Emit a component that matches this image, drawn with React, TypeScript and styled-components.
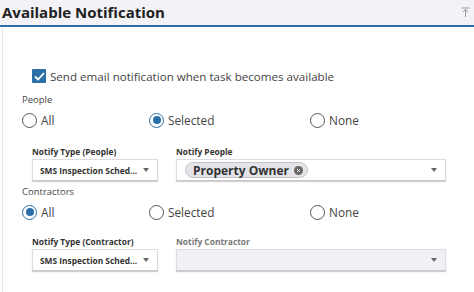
import React from "react";
import styled, { createGlobalStyle } from "styled-components";

const Global = createGlobalStyle`
  html, body { margin: 0; padding: 0; background: #fff; }
  body { font-family: "Open Sans", "Noto Sans", sans-serif; color: #444; }
  * { box-sizing: border-box; }
`;

const Panel = styled.div`
  width: 474px;
  height: 292px;
  overflow: hidden;
  background: #fff;
`;

const Header = styled.div`
  height: 27px;
  background: #f3f3f7;
  border-bottom: 2px solid #2b6fa8;
  display: flex;
  align-items: center;
  justify-content: space-between;
  padding: 0 4px 2px 2px;
`;

const Title = styled.h1`
  margin: 0;
  font-size: 15px;
  font-weight: 700;
  color: #222;
`;

const Body = styled.div`
  border-left: 1px solid #e8e8ec;
  margin-left: 2px;
  padding: 41px 0 0 19px;
  height: 265px;
`;

const CheckRow = styled.label`
  display: flex;
  align-items: center;
  gap: 4px;
  margin-left: 10px;
  font-size: 11.6px;
  color: #444;
  height: 16px;
`;

const CheckBox = styled.span`
  width: 14px;
  height: 14px;
  background: #2b6fa8;
  border-radius: 1px;
  display: flex;
  align-items: center;
  justify-content: center;
`;

const GroupLabel = styled.div<{ $top: number }>`
  font-size: 9.5px;
  color: #444;
  margin-top: ${(p) => p.$top}px;
  line-height: 14px;
`;

const RadioRow = styled.div`
  display: grid;
  grid-template-columns: 127px 161px auto;
  margin-top: 4px;
  height: 18px;
  align-items: center;
`;

const RadioItem = styled.div`
  display: flex;
  align-items: center;
  gap: 4px;
  font-size: 11.8px;
  color: #444;
`;

const RadioCircle = styled.span<{ $on: boolean }>`
  width: 15px;
  height: 15px;
  border-radius: 50%;
  border: 1.5px solid ${(p) => (p.$on ? "#2b6fa8" : "#555")};
  display: flex;
  align-items: center;
  justify-content: center;
  &::after {
    content: "";
    width: 8px;
    height: 8px;
    border-radius: 50%;
    background: ${(p) => (p.$on ? "#2b6fa8" : "transparent")};
  }
`;

const FieldRow = styled.div<{ $top: number }>`
  display: flex;
  gap: 18px;
  margin-left: 10px;
  margin-top: ${(p) => p.$top}px;
`;

const Field = styled.div<{ $w: number }>`
  width: ${(p) => p.$w}px;
  display: flex;
  flex-direction: column;
  gap: 1px;
`;

const FieldLabel = styled.div<{ $muted?: boolean }>`
  font-size: 8.4px;
  font-weight: 700;
  color: ${(p) => (p.$muted ? "#777" : "#333")};
  line-height: 12px;
  height: 12px;
  white-space: nowrap;
`;

const SelectBox = styled.div<{ $disabled?: boolean }>`
  height: 22px;
  border: 1px solid #dcdce2;
  border-bottom-color: #c8c8cc;
  box-shadow: 0 1px 1px rgba(0, 0, 0, 0.18);
  background: ${(p) => (p.$disabled ? "#f1f1f5" : "#fff")};
  display: flex;
  align-items: center;
  justify-content: space-between;
  padding: 0 8px 0 7px;
`;

const SelectText = styled.span`
  font-size: 8.4px;
  font-weight: 700;
  color: #333;
  white-space: nowrap;
`;

const Caret = styled.span`
  width: 0;
  height: 0;
  border-left: 3.5px solid transparent;
  border-right: 3.5px solid transparent;
  border-top: 4px solid #666;
`;

const Chip = styled.span`
  display: inline-flex;
  align-items: center;
  gap: 5px;
  height: 16px;
  padding: 0 4px 0 7px;
  margin-left: 1px;
  background: #e4e4e8;
  border: 1px solid #c4c4c8;
  border-radius: 9px;
  font-size: 12px;
  font-weight: 700;
  color: #333;
  white-space: nowrap;
`;

const ChipX = styled.span`
  width: 9px;
  height: 9px;
  border-radius: 50%;
  background: #666;
  display: flex;
  align-items: center;
  justify-content: center;
`;

const Radio = ({ label, on }: { label: string; on?: boolean }) => (
  <RadioItem>
    <RadioCircle $on={!!on} />
    {label}
  </RadioItem>
);

export default function App() {
  return (
    <>
      <Global />
      <Panel>
        <Header>
          <Title>Available Notification</Title>
          <svg width="9" height="10" viewBox="0 0 9 10">
            <line x1="0.5" y1="1" x2="8.5" y2="1" stroke="#999" strokeWidth="1" />
            <line x1="4.5" y1="2.5" x2="4.5" y2="10" stroke="#999" strokeWidth="1" />
            <polyline points="2,5 4.5,2.5 7,5" fill="none" stroke="#999" strokeWidth="1" />
          </svg>
        </Header>
        <Body>
          <CheckRow>
            <CheckBox>
              <svg width="11" height="9" viewBox="0 0 11 9">
                <polyline points="1,4.5 4,7.5 10,1.2" fill="none" stroke="#fff" strokeWidth="1.8" />
              </svg>
            </CheckBox>
            Send email notification when task becomes available
          </CheckRow>
          <GroupLabel $top={9}>People</GroupLabel>
          <RadioRow>
            <Radio label="All" />
            <Radio label="Selected" on />
            <Radio label="None" />
          </RadioRow>
          <FieldRow $top={17}>
            <Field $w={126}>
              <FieldLabel>Notify Type (People)</FieldLabel>
              <SelectBox>
                <SelectText>SMS Inspection Sched...</SelectText>
                <Caret />
              </SelectBox>
            </Field>
            <Field $w={270}>
              <FieldLabel>Notify People</FieldLabel>
              <SelectBox>
                <Chip>
                  Property Owner
                  <ChipX>
                    <svg width="5" height="5" viewBox="0 0 5 5">
                      <path d="M1 1L4 4M4 1L1 4" stroke="#e4e4e8" strokeWidth="1" />
                    </svg>
                  </ChipX>
                </Chip>
                <Caret />
              </SelectBox>
            </Field>
          </FieldRow>
          <GroupLabel $top={4}>Contractors</GroupLabel>
          <RadioRow>
            <Radio label="All" on />
            <Radio label="Selected" />
            <Radio label="None" />
          </RadioRow>
          <FieldRow $top={15}>
            <Field $w={126}>
              <FieldLabel>Notify Type (Contractor)</FieldLabel>
              <SelectBox>
                <SelectText>SMS Inspection Sched...</SelectText>
                <Caret />
              </SelectBox>
            </Field>
            <Field $w={270}>
              <FieldLabel $muted>Notify Contractor</FieldLabel>
              <SelectBox $disabled>
                <span />
                <Caret />
              </SelectBox>
            </Field>
          </FieldRow>
        </Body>
      </Panel>
    </>
  );
}
